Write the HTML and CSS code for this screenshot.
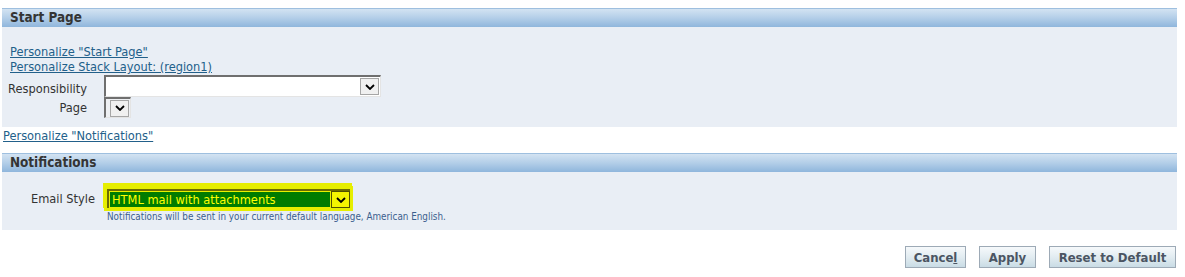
FILE: index.html
```html
<!DOCTYPE html>
<html>
<head>
<meta charset="utf-8">
<link rel="stylesheet" href="styles.css">
</head>
<body>
<div class="page">
  <div class="hdr">Start Page</div>
  <div class="panel panel-start">
    <a class="lnk" href="#">Personalize "Start Page"</a>
    <a class="lnk" href="#">Personalize Stack Layout: (region1)</a>
    <div class="form">
      <div class="lbl lbl-resp">Responsibility</div>
      <div class="sel sel-wide">
        <span class="sel-text"></span>
        <span class="dd"><svg width="10" height="6" viewBox="0 0 10 6"><path d="M1 1 L5 5 L9 1" fill="none" stroke="#000" stroke-width="1.8"/></svg></span>
      </div>
      <div class="lbl">Page</div>
      <div class="sel sel-narrow">
        <span class="dd"><svg width="10" height="6" viewBox="0 0 10 6"><path d="M1 1 L5 5 L9 1" fill="none" stroke="#000" stroke-width="1.8"/></svg></span>
      </div>
    </div>
  </div>
  <a class="lnk lnk-notif" href="#">Personalize "Notifications"</a>
  <div class="hdr hdr-notif">Notifications</div>
  <div class="panel panel-notif">
    <div class="form form-notif">
      <div class="lbl">Email Style</div>
      <div class="sel-email"><span class="email-text">HTML mail with attachments</span><span class="dd dd-email"><svg width="10" height="6" viewBox="0 0 10 6"><path d="M1 1 L5 5 L9 1" fill="none" stroke="#000" stroke-width="1.8"/></svg></span></div>
      <div></div>
      <div class="hint">Notifications will be sent in your current default language, American English.</div>
    </div>
  </div>
  <div class="actions">
    <button class="btn btn-cancel">Cance<u>l</u></button>
    <button class="btn btn-apply">Apply</button>
    <button class="btn btn-reset">Reset to Default</button>
  </div>
</div>
</body>
</html>
```

FILE: styles.css
```css
html, body {
  margin: 0;
  padding: 0;
  background: #ffffff;
}
body {
  font-family: "DejaVu Sans Condensed", "DejaVu Sans", "Liberation Sans", sans-serif;
  font-size: 12.7px;
  color: #333333;
}
.page {
  padding: 8px 8px 0 2px;
}
.hdr {
  height: 18px;
  line-height: 18px;
  border-top: 1px solid #9ebfdf;
  background: linear-gradient(to bottom, #d3e3f2 0%, #b3cee8 50%, #8fb6dc 100%);
  font-weight: bold;
  font-size: 13.4px;
  color: #343434;
  padding-left: 8px;
}
.panel {
  background: #e9eef5;
}
.panel-start {
  padding: 17px 0 9px 8px;
}
.lnk {
  display: block;
  color: #22608a;
  text-decoration: underline;
  line-height: 15px;
  width: max-content;
}
.lnk-notif {
  margin: 1px 0 0 1px;
}
.hdr-notif {
  margin-top: 10px;
}
.form {
  display: grid;
  grid-template-columns: 77px auto;
  column-gap: 17px;
  align-items: center;
  justify-items: start;
  margin-top: 1px;
}
.lbl {
  justify-self: end;
  color: #333333;
  line-height: 15px;
}
.lbl-resp {
  padding-top: 4px;
}
.sel {
  box-sizing: border-box;
  display: flex;
  align-items: center;
  justify-content: flex-end;
  border-top: 2px solid #6f6f6f;
  border-left: 2px solid #6f6f6f;
  border-right: 1px solid #e4e4e4;
  border-bottom: 1px solid #e4e4e4;
  background: #ffffff;
}
.sel-wide {
  width: 277px;
  height: 22px;
  padding-right: 1px;
}
.sel-narrow {
  width: 27px;
  height: 21px;
  background: #eef0f3;
  padding-right: 1px;
}
.dd {
  box-sizing: border-box;
  width: 19px;
  height: 17px;
  display: flex;
  align-items: center;
  justify-content: center;
  background: #f0f0f0;
  border: 1px solid #a6a6a6;
}
.panel-notif {
  padding: 17px 0 6px 8px;
}
.form-notif {
  grid-template-columns: 85px auto;
  column-gap: 12px;
  row-gap: 0;
  margin-top: 0;
}
.sel-email {
  box-sizing: border-box;
  width: 243px;
  height: 19px;
  display: flex;
  align-items: center;
  background: #007c00;
  color: #ffff00;
  border-top: 2px solid #6c6c00;
  border-left: 2px solid #6c6c00;
  box-shadow: 0 0 0 3px #e6ee00, -1px -3px 0 3px #e6ee00;
}
.email-text {
  box-sizing: border-box;
  height: 17px;
  line-height: 15px;
  flex: 1;
  padding-left: 2px;
  border: 1px solid #e9ef00;
}
.dd-email {
  height: 17px;
  background: #f4f400;
  border: 1px solid #505000;
}
.hint {
  font-size: 9.8px;
  color: #3b5f8e;
  line-height: 14px;
  margin-top: 2px;
}
.actions {
  display: flex;
  justify-content: flex-end;
  gap: 13px;
  margin-top: 16px;
  padding-right: 1px;
}
.btn {
  height: 22px;
  padding: 0 6px;
  font-family: "DejaVu Sans Condensed", "DejaVu Sans", "Liberation Sans", sans-serif;
  font-size: 13px;
  font-weight: bold;
  color: #4b5563;
  border: 1px solid #9daab6;
  background: linear-gradient(to bottom, #f6f9fb 0%, #e2ecf1 50%, #c9dce5 100%);
}
.btn-cancel { width: 61px; }
.btn-apply { width: 57px; }
.btn-reset { width: 127px; }
```
